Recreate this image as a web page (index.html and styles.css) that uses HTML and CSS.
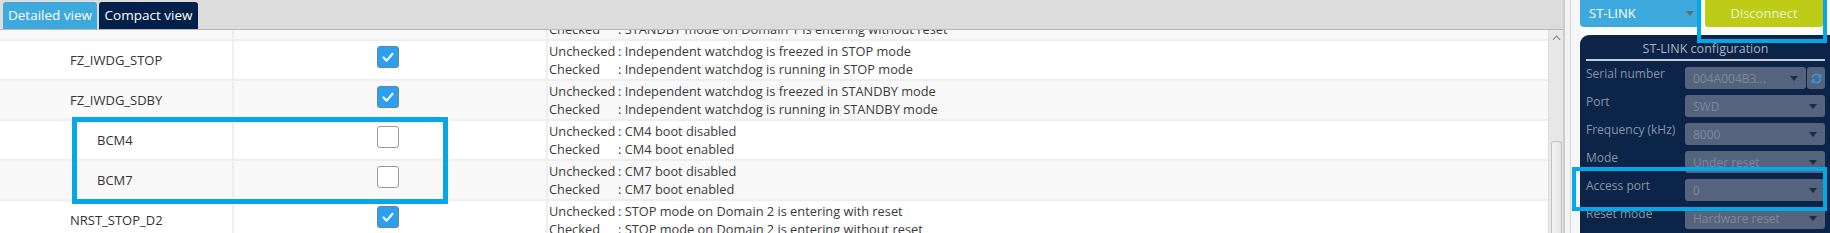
FILE: index.html
```html
<!DOCTYPE html>
<html>
<head>
<meta charset="utf-8">
<link rel="stylesheet" href="styles.css">
</head>
<body>
<div class="app">
  <div class="main">
    <div class="tabbar">
      <div class="tab tab-detailed">Detailed view</div>
      <div class="tab tab-compact">Compact view</div>
    </div>
    <div class="tbody">
      <div class="viewport">
        <div class="rows">
          <div class="row alt">
            <div class="c-name"></div>
            <div class="c-check"></div>
            <div class="c-desc"><div><span class="lbl">Unchecked</span>: STANDBY mode on Domain 1 is entering with reset</div><div><span class="lbl">Checked</span>: STANDBY mode on Domain 1 is entering without reset</div></div>
          </div>
          <div class="row">
            <div class="c-name">FZ_IWDG_STOP</div>
            <div class="c-check"><span class="cb on"><svg viewBox="0 0 22 22"><path d="M6 11.5 L9.5 15 L16 7.5"/></svg></span></div>
            <div class="c-desc"><div><span class="lbl">Unchecked</span>: Independent watchdog is freezed in STOP mode</div><div><span class="lbl">Checked</span>: Independent watchdog is running in STOP mode</div></div>
          </div>
          <div class="row alt">
            <div class="c-name">FZ_IWDG_SDBY</div>
            <div class="c-check"><span class="cb on"><svg viewBox="0 0 22 22"><path d="M6 11.5 L9.5 15 L16 7.5"/></svg></span></div>
            <div class="c-desc"><div><span class="lbl">Unchecked</span>: Independent watchdog is freezed in STANDBY mode</div><div><span class="lbl">Checked</span>: Independent watchdog is running in STANDBY mode</div></div>
          </div>
          <div class="row">
            <div class="c-name indent">BCM4</div>
            <div class="c-check"><span class="cb"></span></div>
            <div class="c-desc"><div><span class="lbl">Unchecked</span>: CM4 boot disabled</div><div><span class="lbl">Checked</span>: CM4 boot enabled</div></div>
          </div>
          <div class="row alt">
            <div class="c-name indent">BCM7</div>
            <div class="c-check"><span class="cb"></span></div>
            <div class="c-desc"><div><span class="lbl">Unchecked</span>: CM7 boot disabled</div><div><span class="lbl">Checked</span>: CM7 boot enabled</div></div>
          </div>
          <div class="row">
            <div class="c-name">NRST_STOP_D2</div>
            <div class="c-check"><span class="cb on"><svg viewBox="0 0 22 22"><path d="M6 11.5 L9.5 15 L16 7.5"/></svg></span></div>
            <div class="c-desc"><div><span class="lbl">Unchecked</span>: STOP mode on Domain 2 is entering with reset</div><div><span class="lbl">Checked</span>: STOP mode on Domain 2 is entering without reset</div></div>
          </div>
        </div>
      </div>
      <div class="vscroll">
        <div class="vs-up"><svg viewBox="0 0 10 6"><path d="M1 5 L5 1 L9 5"/></svg></div>
        <div class="vs-thumb"></div>
      </div>
    </div>
  </div>
  <div class="splitter"></div>
  <div class="side">
    <div class="side-top">
      <div class="sel-stlink"><span>ST-LINK</span><svg class="caret" viewBox="0 0 10 6"><polygon points="0,0 10,0 5,6"/></svg></div>
      <div class="btn-disconnect">Disconnect</div>
    </div>
    <div class="config">
      <div class="cfg-title">ST-LINK configuration</div>
      <div class="cfg-row">
        <div class="cfg-label">Serial number</div>
        <div class="cfg-field serial"><span>004A004B3...</span><svg class="caret dark" viewBox="0 0 10 6"><polygon points="0,0 10,0 5,6"/></svg></div>
        <div class="cfg-refresh"><svg viewBox="0 0 16 16"><path d="M3 7.5 A5 5 0 0 1 11.8 4.6"/><polygon points="14,2 14,7.2 8.8,7.2"/><path d="M13 8.5 A5 5 0 0 1 4.2 11.4"/><polygon points="2,14 2,8.8 7.2,8.8"/></svg></div>
      </div>
      <div class="cfg-row">
        <div class="cfg-label">Port</div>
        <div class="cfg-field"><span>SWD</span><svg class="caret dark" viewBox="0 0 10 6"><polygon points="0,0 10,0 5,6"/></svg></div>
      </div>
      <div class="cfg-row">
        <div class="cfg-label">Frequency (kHz)</div>
        <div class="cfg-field"><span>8000</span><svg class="caret dark" viewBox="0 0 10 6"><polygon points="0,0 10,0 5,6"/></svg></div>
      </div>
      <div class="cfg-row">
        <div class="cfg-label">Mode</div>
        <div class="cfg-field"><span>Under reset</span><svg class="caret dark" viewBox="0 0 10 6"><polygon points="0,0 10,0 5,6"/></svg></div>
      </div>
      <div class="cfg-row">
        <div class="cfg-label">Access port</div>
        <div class="cfg-field"><span>0</span><svg class="caret dark" viewBox="0 0 10 6"><polygon points="0,0 10,0 5,6"/></svg></div>
      </div>
      <div class="cfg-row">
        <div class="cfg-label">Reset mode</div>
        <div class="cfg-field"><span>Hardware reset</span><svg class="caret dark" viewBox="0 0 10 6"><polygon points="0,0 10,0 5,6"/></svg></div>
      </div>
    </div>
  </div>
  <div class="hl hl-bcm"></div>
  <div class="hl hl-connect"></div>
  <div class="hl hl-ap"></div>
</div>
</body>
</html>
```
FILE: styles.css
```css
* { box-sizing: border-box; }
html, body { margin: 0; padding: 0; }
body {
  width: 1830px;
  height: 233px;
  overflow: hidden;
  background: #ffffff;
  font-family: "Open Sans", "Noto Sans", sans-serif;
}
.app {
  position: relative;
  display: flex;
  width: 1830px;
  height: 233px;
}
.main {
  width: 1565px;
  display: flex;
  flex-direction: column;
  border-right: 2px solid #cdcdcd;
}
.tabbar {
  height: 30px;
  background: #dcdcdc;
  border-bottom: 1px solid #b8b8b8;
  display: flex;
  align-items: flex-end;
  gap: 2px;
  padding-left: 3px;
  flex-shrink: 0;
}
.tab {
  height: 27px;
  line-height: 26px;
  color: #ffffff;
  font-size: 13.5px;
  text-align: center;
  white-space: nowrap;
  border-radius: 3px 3px 0 0;
}
.tab-detailed { width: 94px; background: #3ea9dc; }
.tab-compact { width: 99px; background: #03204a; }
.tbody {
  flex: 1;
  display: flex;
  overflow: hidden;
}
.viewport {
  width: 1548px;
  overflow: hidden;
}
.rows { margin-top: -29px; }
.row {
  display: flex;
  height: 40px;
  border-bottom: 2px solid #eeeeee;
  background: #ffffff;
}
.row.alt { background: #f9f9f9; }
.c-name {
  width: 234px;
  border-right: 2px solid #efefef;
  padding-left: 70px;
  display: flex;
  align-items: center;
  font-size: 13px;
  color: #333333;
}
.c-name.indent { padding-left: 97px; }
.c-check {
  width: 314px;
  border-right: 2px solid #efefef;
  padding-left: 143px;
  padding-top: 5px;
}
.cb {
  display: block;
  width: 22px;
  height: 22px;
  border: 1px solid #9a9a9a;
  border-radius: 3px;
  background: #ffffff;
}
.cb.on {
  background: #2b9ff0;
  border-color: #6f8294;
}
.cb svg { display: block; width: 20px; height: 20px; }
.cb svg path {
  fill: none;
  stroke: #ffffff;
  stroke-width: 2.4;
  stroke-linecap: round;
  stroke-linejoin: round;
}
.c-desc {
  flex: 1;
  padding-left: 1px;
  display: flex;
  flex-direction: column;
  justify-content: center;
  font-size: 12.8px;
  line-height: 18px;
  color: #3a3a3a;
  white-space: nowrap;
}
.lbl { display: inline-block; width: 69px; }
.vscroll {
  width: 15px;
  background: #e8e8e8;
  border-left: 1px solid #dddddd;
  display: flex;
  flex-direction: column;
  align-items: center;
}
.vs-up { height: 14px; padding-top: 5px; }
.vs-up svg { display: block; width: 9px; height: 6px; }
.vs-up path { fill: none; stroke: #8a8a8a; stroke-width: 1.3; }
.vs-thumb {
  margin-top: 97px;
  width: 11px;
  flex: 1;
  background: linear-gradient(to right, #f4f4f4, #e4e4e4);
  border: 1px solid #c2c2c2;
  border-bottom: none;
  border-radius: 3px 3px 0 0;
}
.splitter {
  width: 15px;
  background: linear-gradient(to right, #f3f3f3 0, #f3f3f3 5px, #d6d6d6 5px, #d6d6d6 6px, #f6f6f6 6px);
}
.side {
  width: 250px;
  background: #fcfcfc;
  display: flex;
  flex-direction: column;
}
.side-top {
  height: 27px;
  display: flex;
  gap: 5px;
  flex-shrink: 0;
}
.sel-stlink {
  width: 120px;
  background: #3ea9dc;
  border-radius: 0 0 4px 4px;
  color: #ffffff;
  font-size: 13px;
  display: flex;
  align-items: center;
  justify-content: space-between;
  padding: 0 6px 1px 9px;
}
.caret { width: 8px; height: 5px; display: block; }
.caret polygon { fill: #5d6c7c; }
.caret.dark polygon { fill: #1d2c45; }
.btn-disconnect {
  width: 118px;
  background: #bdcd17;
  border-radius: 0 0 3px 3px;
  color: #eef2d0;
  font-size: 13px;
  text-align: center;
  line-height: 27px;
}
.config {
  margin-top: 8px;
  flex: 1;
  background: #0b2447;
  border-radius: 9px 0 0 0;
  padding: 4px 5px 0 6px;
}
.cfg-title {
  text-align: center;
  font-size: 12.5px;
  line-height: 20px;
  color: #a9b3c2;
  border-bottom: 2px solid #c6cdd7;
}
.cfg-row {
  display: flex;
  height: 22px;
  margin-top: 6px;
}
.cfg-label {
  width: 99px;
  font-size: 12px;
  line-height: 14px;
  color: #8796a9;
  white-space: nowrap;
}
.cfg-field {
  width: 140px;
  height: 22px;
  background: #55647c;
  border-radius: 3px;
  color: #7b899e;
  font-size: 12px;
  white-space: nowrap;
  display: flex;
  align-items: center;
  justify-content: space-between;
  padding: 0 8px 0 8px;
}
.cfg-field.serial { width: 121px; margin-right: 1px; }
.cfg-refresh {
  width: 18px;
  height: 22px;
  background: #55647c;
  border-radius: 3px;
  display: flex;
  align-items: center;
  justify-content: center;
}
.cfg-refresh svg { width: 13px; height: 13px; display: block; }
.cfg-refresh path { fill: none; stroke: #2f9be2; stroke-width: 2; }
.cfg-refresh polygon { fill: #2f9be2; }
.hl {
  position: absolute;
  border: 5px solid #03a8e8;
  pointer-events: none;
}
.hl-bcm { left: 72px; top: 117px; width: 376px; height: 87px; }
.hl-connect { left: 1697px; top: -6px; width: 130px; height: 49px; border-width: 4px; }
.hl-ap { left: 1572px; top: 167px; width: 255px; height: 44px; border-width: 4px; }
```
